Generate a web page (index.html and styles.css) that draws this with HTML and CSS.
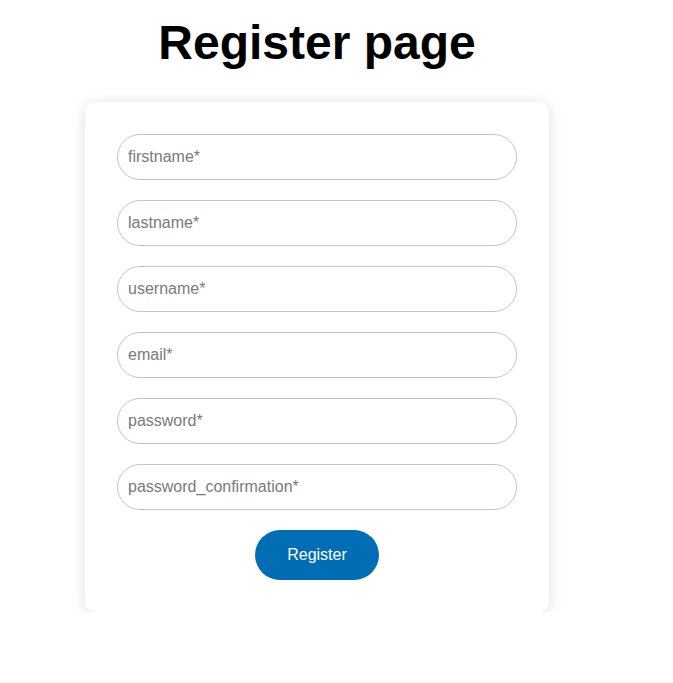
FILE: index.html
```html
<!DOCTYPE html>
<html>
<head>
<meta charset="utf-8">
<link rel="stylesheet" href="styles.css">
</head>
<body>
<div class="page">
  <h1 class="title">Register page</h1>
  <form class="card">
    <input class="field" type="text" placeholder="firstname*">
    <input class="field" type="text" placeholder="lastname*">
    <input class="field" type="text" placeholder="username*">
    <input class="field" type="email" placeholder="email*">
    <input class="field" type="password" placeholder="password*">
    <input class="field" type="password" placeholder="password_confirmation*">
    <button class="btn" type="button">Register</button>
  </form>
</div>
</body>
</html>
```

FILE: styles.css
```css
html, body {
  margin: 0;
  padding: 0;
  background: #ffffff;
  font-family: "Liberation Sans", Arial, Helvetica, sans-serif;
}
.page {
  width: 464px;
  margin-left: 85px;
  display: flex;
  flex-direction: column;
  align-items: stretch;
}
.title {
  margin: 16px 0 32px;
  font-size: 48px;
  font-weight: bold;
  text-align: center;
  color: #000;
  line-height: 54px;
}
.card {
  background: #fff;
  border-radius: 10px;
  box-shadow: 0 2px 15px rgba(0, 0, 0, 0.13);
  padding: 32px 32px 32px;
  display: flex;
  flex-direction: column;
  align-items: center;
  gap: 20px;
}
.field {
  box-sizing: border-box;
  width: 400px;
  height: 46px;
  border: 1px solid #c4c4c4;
  border-radius: 23px;
  padding: 0 10px;
  font-family: "Liberation Sans", Arial, sans-serif;
  font-size: 16px;
  color: #333;
  outline: none;
  background: #fff;
}
.field::placeholder {
  color: #7a7a7a;
}
.btn {
  width: 124px;
  height: 50px;
  border: none;
  border-radius: 25px;
  background: #006db5;
  color: #fff;
  font-family: "Liberation Sans", Arial, sans-serif;
  font-size: 16px;
  cursor: pointer;
}
```
